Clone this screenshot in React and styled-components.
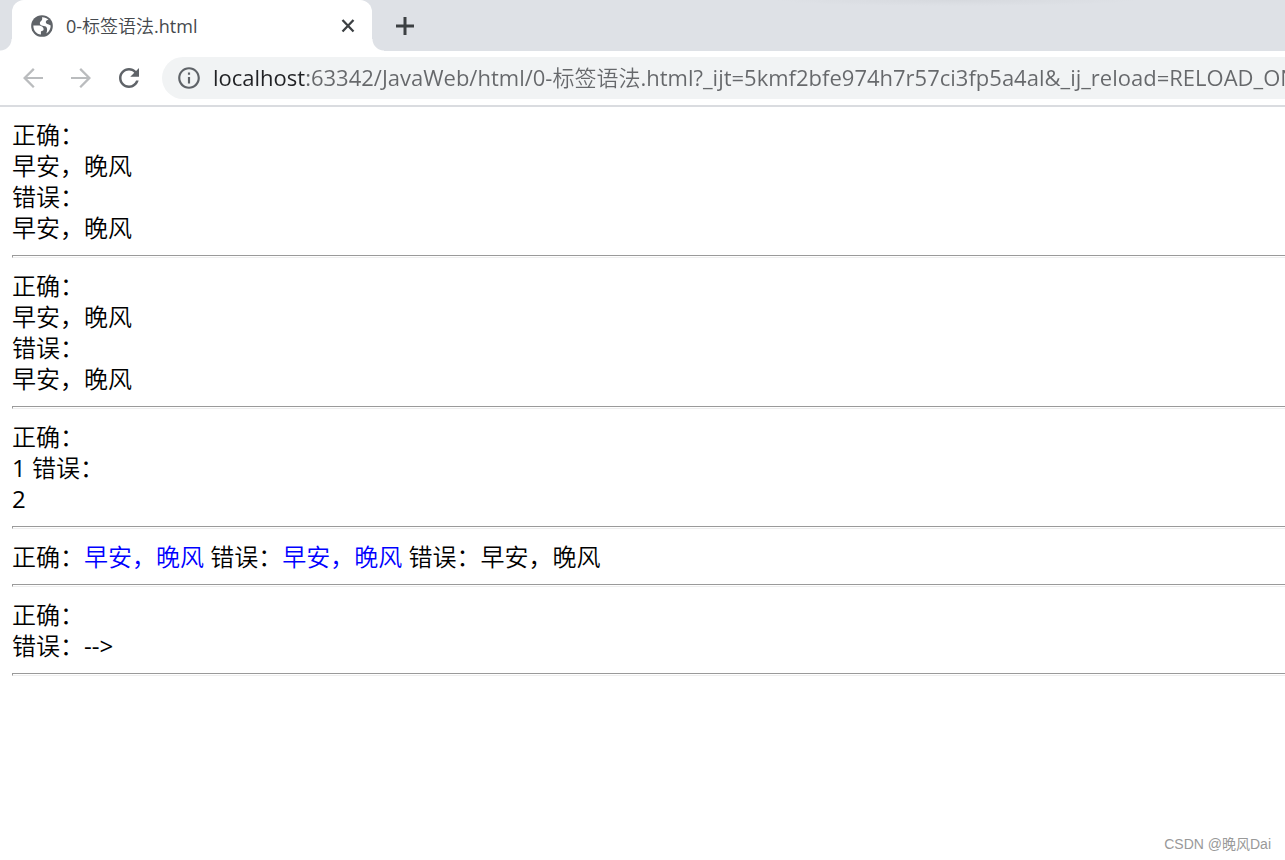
import React from 'react'
import styled, { createGlobalStyle } from 'styled-components'

const greeting = '早安，晚风'
const url =
    'localhost:63342/JavaWeb/html/0-标签语法.html?_ijt=5kmf2bfe974h7r57ci3fp5a4al&_ij_reload=RELOAD_ON_SAVE'

const blocks = [
    ['正确：', greeting, '错误：', greeting],
    ['正确：', greeting, '错误：', greeting],
    ['正确：', '1 错误：', '2'],
]

const App = () => {
    return (
        <Window>
            <GlobalStyle />
            <TabStrip>
                <Tab>
                    <Icon $size={26} viewBox='0 0 24 24'>
                        <circle cx='12' cy='12' r='10' />
                        <path
                            d='M4 11.500H8.500C11.500 11.500 13.500 13 13.500 15C13.500 16.500 12 16.500 11 17V19.800C6.800 19.500 4 16 4 11.500Z'
                            fill='#ffffff'
                        />
                        <path
                            d='M12 4C14.500 3.900 16.500 4.800 18 6.500C16.500 6.500 15.500 7 15.500 8.500C15.500 10 17.500 10 20 11.500C20.100 14.500 18.700 17.200 16 18.900C17 16.500 17 14.500 16 13C15 11.500 10 12.500 10 9.500C10 7.500 13 7.500 12 4Z'
                            fill='#ffffff'
                        />
                    </Icon>
                    <TabTitle>0-标签语法.html</TabTitle>
                    <IconButton aria-label='Close tab' $size={24} $color='#3c4043'>
                        <Icon $size={24} viewBox='0 0 24 24'>
                            <path d='M6.500 6L17.500 17.500M17.500 6L6.500 17.500' stroke='currentColor' strokeWidth='2.300' />
                        </Icon>
                    </IconButton>
                </Tab>
                <IconButton aria-label='New tab' $size={40} $color='#3c4043'>
                    <Icon $size={24} viewBox='0 0 24 24'>
                        <path d='M12 3V21M3 12H21' stroke='currentColor' strokeWidth='3' />
                    </Icon>
                </IconButton>
            </TabStrip>

            <Toolbar>
                <IconButton aria-label='Back' $size={30} $color='#babcbe'>
                    <Icon $size={30} viewBox='0 0 24 24'>
                        <path d='M20 11.200H7.400l5.900-5.900L12 4l-8 8 8 8 1.300-1.300L7.400 12.800H20z' />
                    </Icon>
                </IconButton>
                <IconButton aria-label='Forward' $size={30} $color='#babcbe'>
                    <Icon $size={30} viewBox='0 0 24 24'>
                        <path d='M4 11.200H16.600l-5.900-5.900L12 4l8 8-8 8-1.300-1.300L16.600 12.800H4z' />
                    </Icon>
                </IconButton>
                <IconButton aria-label='Reload' $size={30} $color='#5f6368'>
                    <Icon $size={30} viewBox='0 0 24 24'>
                        <path d='M17.650 6.350C16.200 4.900 14.210 4 12 4c-4.420 0-7.990 3.580-7.990 8s3.570 8 7.990 8c3.730 0 6.840-2.550 7.730-6h-2.080c-.820 2.330-3.040 4-5.650 4-3.310 0-6-2.690-6-6s2.690-6 6-6c1.660 0 3.140.690 4.220 1.780L13 11h7V4l-2.350 2.350z' />
                    </Icon>
                </IconButton>
                <AddressBar>
                    <Icon $size={26} viewBox='0 0 24 24'>
                        <path d='M11 7h2v2h-2zm0 4h2v6h-2zm1-9C6.480 2 2 6.480 2 12s4.480 10 10 10 10-4.480 10-10S17.520 2 12 2zm0 18c-4.410 0-8-3.590-8-8s3.590-8 8-8 8 3.590 8 8-3.590 8-8 8z' />
                    </Icon>
                    <AddressInput aria-label='Address' type='text' defaultValue={url} />
                </AddressBar>
            </Toolbar>

            <Content>
                {blocks.map((lines, i) => (
                    <React.Fragment key={i}>
                        {lines.map((line, j) => (
                            <Line key={j}>{line}</Line>
                        ))}
                        <Rule />
                    </React.Fragment>
                ))}
                <Line>
                    正确：<Blue>{greeting}</Blue> 错误：<Blue>{greeting}</Blue> 错误：{greeting}
                </Line>
                <Rule />
                <Line>正确：</Line>
                <Line>错误：--&gt;</Line>
                <Rule />
            </Content>

            <Watermark>CSDN @晚风Dai</Watermark>
        </Window>
    )
}

export default App

const GlobalStyle = createGlobalStyle`
  body {
    margin: 0;
    background: #ffffff;
    font-family: "Open Sans", "Noto Sans CJK SC DemiLight", "Noto Sans CJK SC", sans-serif;
  }

  * {
    box-sizing: border-box;
  }
`;

const Window = styled.div`
  display: flex;
  flex-direction: column;
  min-height: 100vh;
  overflow: hidden;
`;

const TabStrip = styled.div`
  display: flex;
  align-items: center;
  height: 51px;
  padding-left: 12px;
  background: radial-gradient(closest-side, #d6d9de, #dee1e6) 84% -6px / 360px 12px no-repeat #dee1e6;
`;

const Tab = styled.div`
  position: relative;
  display: flex;
  align-items: center;
  gap: 11px;
  width: 360px;
  height: 51px;
  padding: 0 12px 0 17px;
  border-radius: 12px 12px 0 0;
  background: #ffffff;
  color: #5f6368;

  &::before,
  &::after {
    content: '';
    position: absolute;
    bottom: 0;
    width: 12px;
    height: 12px;
  }

  &::before {
    right: 100%;
    background: radial-gradient(circle at 0 0, transparent 11px, #ffffff 12px);
  }

  &::after {
    left: 100%;
    background: radial-gradient(circle at 100% 0, transparent 11px, #ffffff 12px);
  }
`;

const TabTitle = styled.span`
  flex: 1;
  font-size: 18px;
  line-height: 24px;
  color: #45494d;
  white-space: nowrap;
`;

const Icon = styled.svg`
  flex: none;
  display: block;
  width: ${({ $size }) => $size}px;
  height: ${({ $size }) => $size}px;
  fill: currentColor;
`;

const IconButton = styled.button`
  flex: none;
  display: flex;
  align-items: center;
  justify-content: center;
  width: ${({ $size }) => $size}px;
  height: ${({ $size }) => $size}px;
  padding: 0;
  border: 0;
  background: none;
  color: ${({ $color }) => $color};

  ${Tab} + & {
    margin-left: 13px;
  }
`;

const Toolbar = styled.div`
  display: flex;
  align-items: center;
  gap: 18px;
  height: 56px;
  padding-left: 18px;
  border-bottom: 2px solid #dadce0;
`;

const AddressBar = styled.label`
  flex: 1;
  display: flex;
  align-items: center;
  gap: 11px;
  min-width: 0;
  height: 42px;
  padding-left: 14px;
  border-radius: 21px 0 0 21px;
  background: #f1f3f4;
  color: #5f6368;
`;

/* host part is drawn darker than the rest of the address */
const AddressInput = styled.input`
  flex: 1;
  min-width: 0;
  height: 36px;
  padding: 0 0 4px;
  border: 0;
  outline: 0;
  font-family: inherit;
  font-size: 22px;
  color: transparent;
  background: linear-gradient(to right, #202124 92px, #66686b 92px);
  background-clip: text;
`;

const Content = styled.main`
  flex: 1;
  padding: 12px 0 0 12px;
`;

const Line = styled.div`
  font-size: 24px;
  line-height: 31px;
  color: #000000;
`;

const Blue = styled.span`
  color: #0000ff;
`;

const Rule = styled.hr`
  height: 3px;
  margin: 12px 0;
  border: 1px inset #eeeeee;
  border-right: 0;
`;

const Watermark = styled.footer`
  padding: 0 14px 6px;
  font-family: "Liberation Sans", "Noto Sans CJK SC", sans-serif;
  font-size: 14px;
  line-height: 20px;
  text-align: right;
  color: #999999;
`;
